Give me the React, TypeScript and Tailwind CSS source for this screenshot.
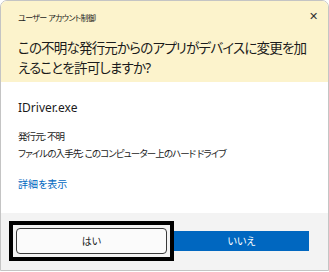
import React from 'react';

const JP = "font-['Noto_Sans','Noto_Sans_CJK_JP',sans-serif] [font-feature-settings:'palt']";

export default function App() {
  return (
    <div className={`w-[329px] h-[272px] bg-white ${JP}`}>
      <div className="w-[329px] h-[271px] flex flex-col border border-[#c4c4c4] rounded-t-[7px] overflow-hidden">
        {/* Header */}
        <div className="bg-[#fcf3cc] h-[81px] shrink-0 pl-[17px] pr-[8px] flex flex-col">
          <div className="flex items-start justify-between h-[37px] pt-[11px]">
            <span className="text-[8px] leading-[11px] tracking-[-0.6px] text-[#1a1a1a]">ユーザー アカウント制御</span>
            <span className="text-[11px] leading-[11px] text-[#333] -mt-[2px] mr-[2px]">✕</span>
          </div>
          <div className="text-[13.5px] leading-[20px] tracking-[-0.8px] text-[#1b1b1b] whitespace-nowrap">
            <div>この不明な発行元からのアプリがデバイスに変更を加</div>
            <div>えることを許可しますか?</div>
          </div>
        </div>

        {/* Body */}
        <div className="flex-1 pl-[17px] pr-[12px] pt-[17px] text-[#1b1b1b]">
          <div className="text-[12px] leading-[18px]">IDriver.exe</div>
          <div className="mt-[11px] text-[9.5px] leading-[17px] tracking-[-0.9px]">
            <div>発行元: 不明</div>
            <div>ファイルの入手先: このコンピューター上のハード ドライブ</div>
          </div>
          <div className="mt-[15px] text-[10px] leading-[14px] text-[#0067c0]">詳細を表示</div>
        </div>

        {/* Footer */}
        <div className="bg-[#f3f3f3] h-[57px] shrink-0 pl-[8px] pr-[19px] pt-[8px] flex items-start">
          <div className="border-[4px] border-black p-[3px] shrink-0">
            <div className="w-[151px] h-[26px] rounded-[4px] border border-[#3a3a3a] bg-[#fbfbfb] flex items-center justify-center text-[10px] text-[#1b1b1b]">
              はい
            </div>
          </div>
          <div className="flex-1 h-[20px] mt-[10px] bg-[#0067c0] flex items-center justify-center text-[10px] text-white">
            いいえ
          </div>
        </div>
      </div>
    </div>
  );
}
